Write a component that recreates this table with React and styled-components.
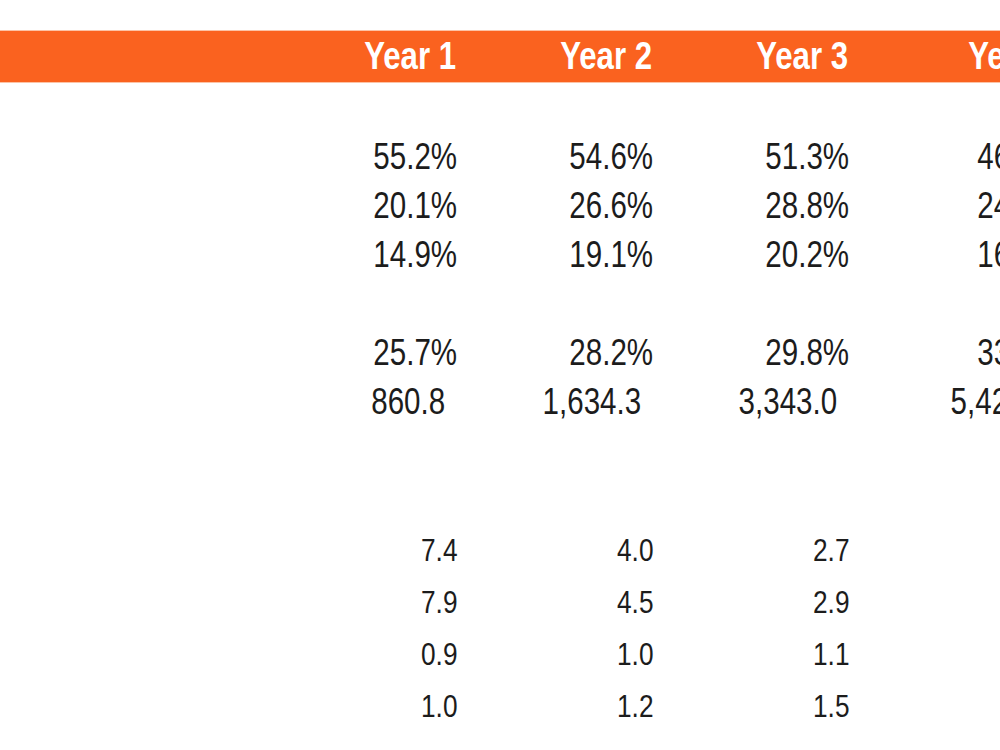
import React from "react";
import styled, { createGlobalStyle } from "styled-components";

const Global = createGlobalStyle`
  html, body {
    margin: 0;
    padding: 0;
    background: #ffffff;
    overflow: hidden;
    width: 1000px;
    height: 750px;
  }
  body {
    font-family: "Liberation Sans", Arial, sans-serif;
  }
`;

const Sheet = styled.div`
  width: 1000px;
  height: 750px;
  overflow: hidden;
  display: flex;
  flex-direction: column;
`;

const Row = styled.div`
  display: grid;
  grid-template-columns: 261px 196px 196px 196px 212px;
  width: 1061px;
  flex: 0 0 auto;
  height: ${(p) => p.$h}px;
  line-height: ${(p) => p.$h}px;
`;

const HeaderRow = styled(Row)`
  background: #fa621f;
  width: 1000px;
  overflow: hidden;
  box-shadow: 0 -1px 0 #fcc3a6, 0 1px 0 #fcc3a6;
`;

const HeadCell = styled.div`
  text-align: right;
  color: #ffffff;
  font-weight: 700;
  font-size: 38px;
  white-space: nowrap;
  padding-right: 1px;
`;

const Cell = styled.div`
  text-align: right;
  color: #1c1c1c;
  font-size: ${(p) => (p.$small ? 32 : 36)}px;
  white-space: nowrap;
  padding-right: ${(p) => (p.$pad ? 12 : 0)}px;
`;

/* Excel-style narrow glyphs: condense the regular face horizontally */
const Narrow = styled.span`
  display: inline-block;
  transform: scaleX(0.82);
  transform-origin: right center;
`;

const years = ["Year 1", "Year 2", "Year 3", "Year 4"];

const rows = [
  { h: 50, vals: null },
  { h: 49, vals: ["55.2%", "54.6%", "51.3%", "46.9%"] },
  { h: 49, vals: ["20.1%", "26.6%", "28.8%", "24.3%"] },
  { h: 49, vals: ["14.9%", "19.1%", "20.2%", "16.8%"] },
  { h: 49, vals: null },
  { h: 49, vals: ["25.7%", "28.2%", "29.8%", "33.1%"] },
  { h: 49, vals: ["860.8", "1,634.3", "3,343.0", "5,426.7"], pad: true },
  { h: 49, vals: null },
  { h: 49, vals: null },
  { h: 52, vals: ["7.4", "4.0", "2.7", "2.0"], small: true },
  { h: 52, vals: ["7.9", "4.5", "2.9", "2.2"], small: true },
  { h: 52, vals: ["0.9", "1.0", "1.1", "1.2"], small: true },
  { h: 52, vals: ["1.0", "1.2", "1.5", "1.8"], small: true },
];

export default function App() {
  return (
    <>
      <Global />
      <Sheet>
        <Row $h={31} />
        <HeaderRow $h={51}>
          <div />
          {years.map((y) => (
            <HeadCell key={y}>
              <Narrow>{y}</Narrow>
            </HeadCell>
          ))}
        </HeaderRow>
        {rows.map((r, i) => (
          <Row key={i} $h={r.h}>
            <div />
            {r.vals &&
              r.vals.map((v, j) => (
                <Cell key={j} $small={r.small} $pad={r.pad}>
                  <Narrow>{v}</Narrow>
                </Cell>
              ))}
          </Row>
        ))}
      </Sheet>
    </>
  );
}
